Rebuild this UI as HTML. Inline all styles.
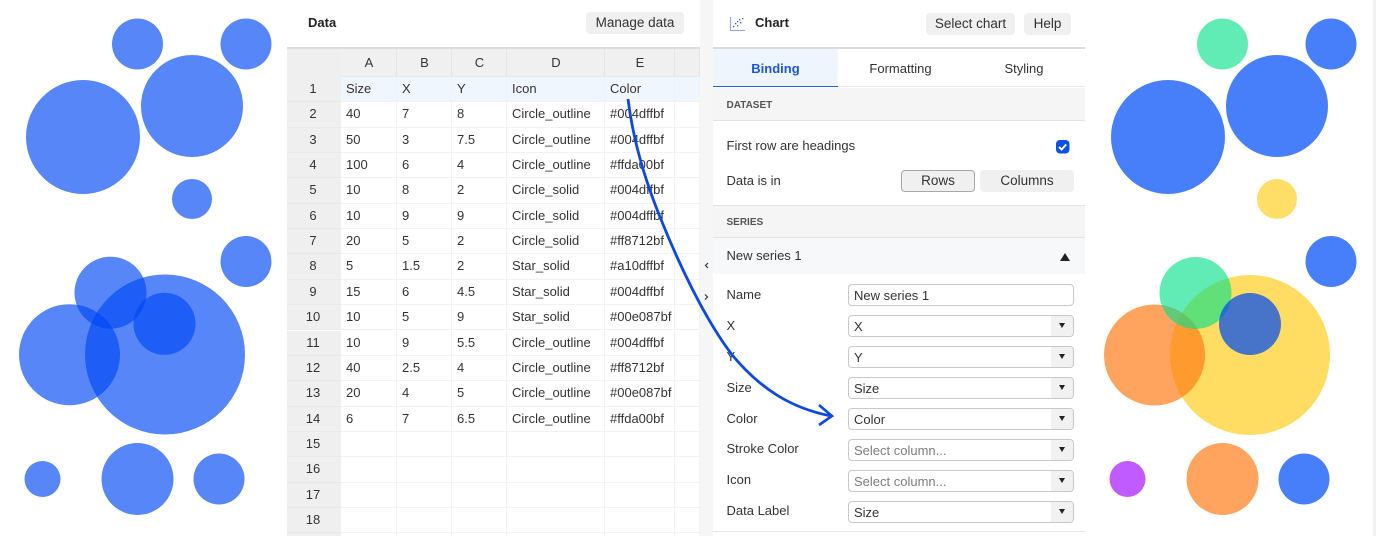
<!DOCTYPE html>
<html><head><meta charset="utf-8">
<style>
*{box-sizing:border-box}
html,body{margin:0;padding:0;width:1376px;height:536px;overflow:hidden;background:#fff}
body{font-family:"Liberation Sans",sans-serif;font-size:13px;color:#333;position:relative}
#root{position:absolute;left:0;top:0;width:1376px;height:536px;filter:blur(.3px)}
.a{position:absolute;white-space:nowrap}
svg{position:absolute;left:0;top:0}
.r{position:absolute;left:287px;width:413px;height:25.35px;display:grid;grid-template-columns:54px 56px 55px 55px 98px 70px 25px;line-height:24px;border-bottom:1px solid #f2f2f2}
.r span{border-right:1px solid #f2f2f2;padding-left:5px;display:block;overflow:hidden;white-space:nowrap}
.r span:first-child{background:#efefef;text-align:center;border-right:none;border-bottom:1px solid #e8e8e8;height:25.35px;padding:0 2px 0 0}
.h{background:#f0f0f0;border-bottom:1px solid #e8e8e8;line-height:29px;height:29px;top:48px}
.h span{text-align:center;padding:0 0 0 1px;border-right:1px solid #e6e6e6}
.h span:first-child{height:29px;padding:0;border-bottom:none}
.h1{background:#f0f6fd}
.btn{position:absolute;background:#f0f0f0;border-radius:4px;text-align:center;line-height:21px;height:22px;font-size:13.5px;color:#333}
.lab{position:absolute;left:726.5px;white-space:nowrap;line-height:16px}
.sel{position:absolute;left:848px;width:226px;height:22px;border:1px solid #c8c8c8;border-radius:4px;background:#fff;line-height:22px;padding-left:5px;font-size:13px;overflow:hidden}
.sel i{position:absolute;right:0;top:0;width:22px;height:20px;background:#f1f1f1}
.sel i:after{content:"";position:absolute;left:8px;top:7px;border-left:3.5px solid transparent;border-right:3.5px solid transparent;border-top:5px solid #222}
.ph{color:#7d7d7d}
.sec{position:absolute;left:713px;width:372px;background:#f5f5f5;border-bottom:1px solid #e2e2e2;font-size:10px;font-weight:bold;color:#555;padding-left:13.5px}
</style></head>
<body><div id="root">
<svg width="1376" height="536" style="z-index:0">
<g fill="#0048f5" fill-opacity=".66">
<circle cx="137.5" cy="44" r="25.5"/><circle cx="246" cy="44" r="25.5"/><circle cx="83" cy="137" r="57"/><circle cx="192" cy="106" r="51"/><circle cx="192" cy="199" r="20"/>
<circle cx="246" cy="261.5" r="25.5"/><circle cx="165" cy="354.5" r="80"/><circle cx="69.5" cy="354.7" r="50.5"/><circle cx="110.5" cy="292.7" r="36"/><circle cx="164.5" cy="323.8" r="31"/>
<circle cx="42.5" cy="479" r="18"/><circle cx="137.5" cy="479" r="36"/><circle cx="219" cy="479" r="25.5"/>
</g>
<g fill-opacity=".72">
<circle cx="1222.5" cy="44" r="25.5" fill="#00e087" fill-opacity=".62"/><circle cx="1331" cy="44" r="25.5" fill="#004dfa"/><circle cx="1168" cy="137" r="57" fill="#004dfa"/><circle cx="1277" cy="106" r="51" fill="#004dfa"/><circle cx="1277" cy="199" r="20" fill="#ffcf1f" fill-opacity=".68"/>
<circle cx="1331" cy="261.5" r="25.5" fill="#004dfa"/><circle cx="1250" cy="355" r="80" fill="#ffcf1f" fill-opacity=".7"/><circle cx="1154.5" cy="355" r="50.5" fill="#ff7d1a" fill-opacity=".7"/><circle cx="1195.5" cy="293" r="36" fill="#00e087" fill-opacity=".62"/><circle cx="1250" cy="324" r="31" fill="#004cf0" fill-opacity=".72"/>
<circle cx="1127.5" cy="479" r="18" fill="#a10dff" fill-opacity=".68"/><circle cx="1222.5" cy="479" r="36" fill="#ff7d1a" fill-opacity=".7"/><circle cx="1304" cy="479" r="25.5" fill="#004dfa"/>
</g>
</svg>

<div class="a" style="left:287px;top:0;width:413px;height:536px;background:#fff"></div>
<div class="a" style="left:700px;top:0;width:13px;height:536px;background:#f6f6f6"></div>
<div class="a" style="left:713px;top:0;width:372px;height:536px;background:#fff"></div>
<div class="a" style="left:1373px;top:0;width:3px;height:536px;background:#f2f2f2"></div>

<div class="a" style="left:287px;top:47px;width:413px;height:2px;background:#dcdcdc;z-index:2"></div>
<div class="a" style="left:713px;top:47px;width:372px;height:2px;background:#dcdcdc;z-index:2"></div>

<b class="a" style="left:308px;top:15px;line-height:16px;color:#222">Data</b>
<div class="btn" style="left:586px;top:12px;width:98px">Manage data</div>

<div class="r h"><span></span><span>A</span><span>B</span><span>C</span><span>D</span><span>E</span><span></span></div>
<div class="r h1" style="top:77px"><span>1</span><span>Size</span><span>X</span><span>Y</span><span>Icon</span><span>Color</span><span></span></div>
<div class="r" style="top:102.35px"><span>2</span><span>40</span><span>7</span><span>8</span><span>Circle_outline</span><span>#004dffbf</span><span></span></div>
<div class="r" style="top:127.7px"><span>3</span><span>50</span><span>3</span><span>7.5</span><span>Circle_outline</span><span>#004dffbf</span><span></span></div>
<div class="r" style="top:153.05px"><span>4</span><span>100</span><span>6</span><span>4</span><span>Circle_outline</span><span>#ffda00bf</span><span></span></div>
<div class="r" style="top:178.4px"><span>5</span><span>10</span><span>8</span><span>2</span><span>Circle_solid</span><span>#004dffbf</span><span></span></div>
<div class="r" style="top:203.75px"><span>6</span><span>10</span><span>9</span><span>9</span><span>Circle_solid</span><span>#004dffbf</span><span></span></div>
<div class="r" style="top:229.1px"><span>7</span><span>20</span><span>5</span><span>2</span><span>Circle_solid</span><span>#ff8712bf</span><span></span></div>
<div class="r" style="top:254.45px"><span>8</span><span>5</span><span>1.5</span><span>2</span><span>Star_solid</span><span>#a10dffbf</span><span></span></div>
<div class="r" style="top:279.8px"><span>9</span><span>15</span><span>6</span><span>4.5</span><span>Star_solid</span><span>#004dffbf</span><span></span></div>
<div class="r" style="top:305.15px"><span>10</span><span>10</span><span>5</span><span>9</span><span>Star_solid</span><span>#00e087bf</span><span></span></div>
<div class="r" style="top:330.5px"><span>11</span><span>10</span><span>9</span><span>5.5</span><span>Circle_outline</span><span>#004dffbf</span><span></span></div>
<div class="r" style="top:355.85px"><span>12</span><span>40</span><span>2.5</span><span>4</span><span>Circle_outline</span><span>#ff8712bf</span><span></span></div>
<div class="r" style="top:381.2px"><span>13</span><span>20</span><span>4</span><span>5</span><span>Circle_outline</span><span>#00e087bf</span><span></span></div>
<div class="r" style="top:406.55px"><span>14</span><span>6</span><span>7</span><span>6.5</span><span>Circle_outline</span><span>#ffda00bf</span><span></span></div>
<div class="r" style="top:431.9px"><span>15</span><span></span><span></span><span></span><span></span><span></span><span></span></div>
<div class="r" style="top:457.25px"><span>16</span><span></span><span></span><span></span><span></span><span></span><span></span></div>
<div class="r" style="top:482.6px"><span>17</span><span></span><span></span><span></span><span></span><span></span><span></span></div>
<div class="r" style="top:507.95px"><span>18</span><span></span><span></span><span></span><span></span><span></span><span></span></div>
<div class="r" style="top:533.3px"><span></span><span></span><span></span><span></span><span></span><span></span><span></span></div>

<svg width="1376" height="536" style="z-index:1">
<g fill="none" stroke="#7a8fd0" stroke-width="1" opacity=".8"><path d="M730.5 17V30.5H745"/></g>
<g fill="#2a55c8"><rect x="733" y="26" width="1.3" height="1.3"/><rect x="735" y="23" width="1.3" height="1.3"/><rect x="737" y="25" width="1.3" height="1.3"/><rect x="737" y="21" width="1.3" height="1.3"/><rect x="739" y="19" width="1.3" height="1.3"/><rect x="742" y="18" width="1.3" height="1.3"/><rect x="740" y="22" width="1.3" height="1.3"/></g>
</svg>
<b class="a" style="left:755px;top:15px;line-height:16px;color:#222">Chart</b>
<div class="btn" style="left:926px;top:12.5px;width:89px">Select chart</div>
<div class="btn" style="left:1024px;top:12.5px;width:47px">Help</div>

<div class="a" style="left:713px;top:49px;width:125px;height:38px;background:#eef5fd;border-bottom:1px solid #1f5fd8;text-align:center;line-height:39px;color:#1a56d6;font-weight:bold">Binding</div>
<div class="a" style="left:838px;top:49px;width:125px;height:38px;border-bottom:1px solid #e6e6e6;text-align:center;line-height:39px">Formatting</div>
<div class="a" style="left:963px;top:49px;width:122px;height:38px;border-bottom:1px solid #e6e6e6;text-align:center;line-height:39px">Styling</div>

<div class="sec" style="top:88px;height:33px;line-height:33px;padding-top:1px">DATASET</div>
<div class="lab" style="top:138px">First row are headings</div>
<svg width="1376" height="536" style="z-index:1"><rect x="1056" y="140" width="13.5" height="13.5" rx="4" fill="#0d50e6"/><path d="M1059 147l2.6 2.5 4.6-5" fill="none" stroke="#fff" stroke-width="2"/></svg>
<div class="lab" style="top:172.5px">Data is in</div>
<div class="btn" style="left:901px;top:170px;width:74px;border:1px solid #a8a8a8;line-height:20px">Rows</div>
<div class="btn" style="left:980px;top:170px;width:94px">Columns</div>

<div class="a" style="left:713px;top:205px;width:372px;height:1px;background:#e2e2e2"></div>
<div class="sec" style="top:206px;height:32px;line-height:31px;padding-top:1px">SERIES</div>
<div class="a" style="left:713px;top:238px;width:372px;height:36px;background:#f6f8fa"></div>
<div class="lab" style="top:248px">New series 1</div>
<div class="a" style="left:1060px;top:253px;width:0;height:0;border-left:5px solid transparent;border-right:5px solid transparent;border-bottom:8px solid #222"></div>

<div class="lab" style="top:287px">Name</div>
<div class="sel" style="top:283.5px;line-height:21px">New series 1</div>
<div class="lab" style="top:318px">X</div>
<div class="sel" style="top:314.5px">X<i></i></div>
<div class="lab" style="top:349px">Y</div>
<div class="sel" style="top:345.5px">Y<i></i></div>
<div class="lab" style="top:379.5px">Size</div>
<div class="sel" style="top:376.5px">Size<i></i></div>
<div class="lab" style="top:410.5px">Color</div>
<div class="sel" style="top:407.5px">Color<i></i></div>
<div class="lab" style="top:441px">Stroke Color</div>
<div class="sel ph" style="top:438.5px">Select column...<i></i></div>
<div class="lab" style="top:472px">Icon</div>
<div class="sel ph" style="top:469.5px">Select column...<i></i></div>
<div class="lab" style="top:503px">Data Label</div>
<div class="sel" style="top:500.5px">Size<i></i></div>
<div class="a" style="left:713px;top:531px;width:372px;height:1px;background:#e6e6e6"></div>

<svg width="1376" height="536" style="z-index:5">
<path d="M708 263l-2.5 2.5 2.5 2.5M705 294.5l2.5 2.5-2.5 2.5" fill="none" stroke="#333" stroke-width="1.2"/>
<path d="M628 99C633 140 645 180 660 217C678 262 705 320 733 356C760 388 790 408 831 416" fill="none" stroke="#0b49e0" stroke-width="2.8"/>
<path d="M819 405L832 416L819 425" fill="none" stroke="#0b49e0" stroke-width="2.6"/>
</svg>
</div></body></html>
